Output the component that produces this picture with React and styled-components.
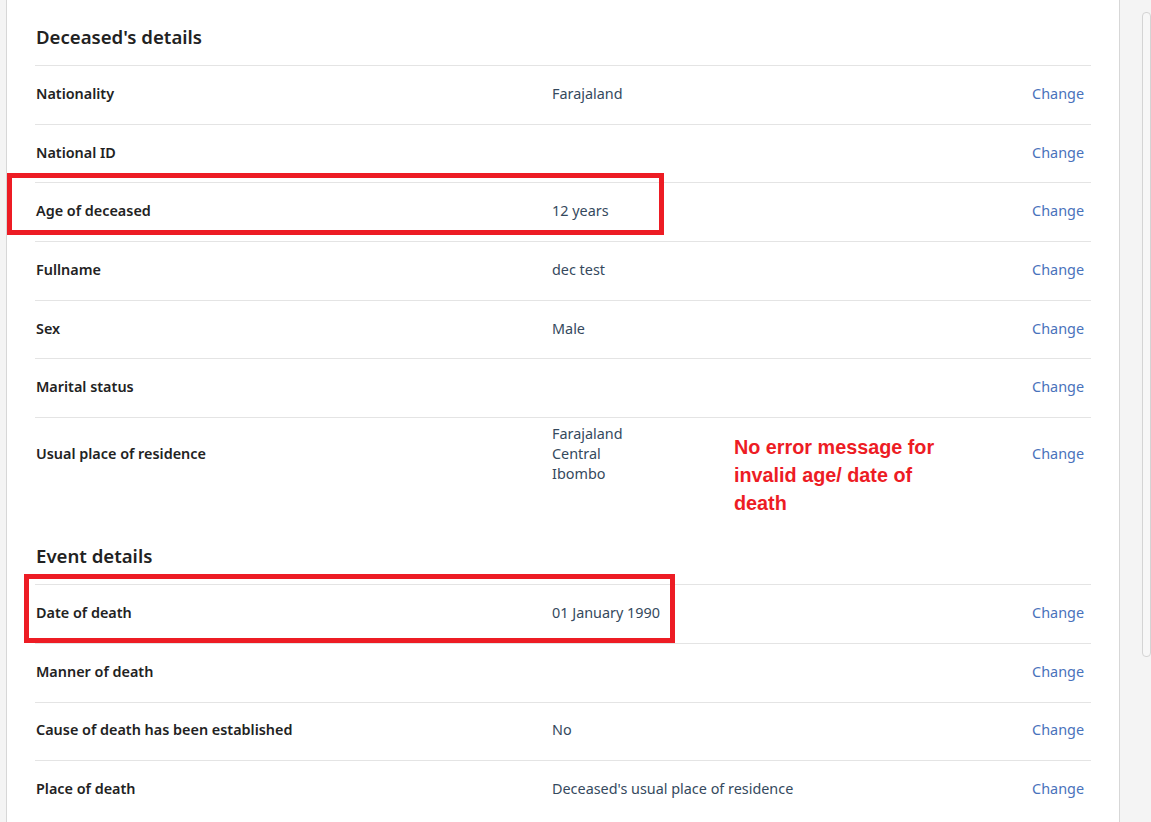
import React from "react";
import styled, { createGlobalStyle } from "styled-components";

const GlobalStyle = createGlobalStyle`
  html, body {
    margin: 0;
    padding: 0;
    background: #f4f4f4;
    font-family: "Noto Sans", "Open Sans", sans-serif;
    overflow: hidden;
  }
`;

const deceased = [
  { label: "Nationality", value: ["Farajaland"] },
  { label: "National ID", value: [] },
  { label: "Age of deceased", value: ["12 years"] },
  { label: "Fullname", value: ["dec test"] },
  { label: "Sex", value: ["Male"] },
  { label: "Marital status", value: [] },
  { label: "Usual place of residence", value: ["Farajaland", "Central", "Ibombo"] },
];

const event = [
  { label: "Date of death", value: ["01 January 1990"] },
  { label: "Manner of death", value: [] },
  { label: "Cause of death has been established", value: ["No"] },
  { label: "Place of death", value: ["Deceased's usual place of residence"] },
];

const DetailRow = ({ label, value }) => (
  <Row>
    <Label>{label}</Label>
    <Value>
      {value.map((v) => (
        <div key={v}>{v}</div>
      ))}
    </Value>
    <Action>Change</Action>
  </Row>
);

const App = () => {
  return (
    <>
      <GlobalStyle />
      <Page>
        <Card>
          <Section>
            <Title>Deceased's details</Title>
            {deceased.map((r) => (
              <DetailRow key={r.label} {...r} />
            ))}
          </Section>
          <Section>
            <Title>Event details</Title>
            {event.map((r) => (
              <DetailRow key={r.label} {...r} />
            ))}
          </Section>
        </Card>
        <SidePanel />

        <Highlight top={173} left={7} width={657} height={62} />
        <Highlight top={574} left={24} width={651} height={69} />
        <Note>No error message for invalid age/ date of death</Note>
      </Page>
    </>
  );
};

export default App;

const Page = styled.div`
  position: relative;
  display: flex;
  align-items: flex-start;
  gap: 22px;
  padding-left: 6px;
  height: 822px;
`;

const Card = styled.div`
  width: 1114px;
  flex-shrink: 0;
  box-sizing: border-box;
  min-height: 900px;
  background: #fff;
  border-left: 1px solid #d7d7d7;
  border-right: 1px solid #d7d7d7;
  padding: 23px 28px 0 28px;
`;

const Section = styled.div`
  & + & {
    margin-top: 50px;
  }
`;

const Title = styled.h2`
  margin: 0 0 15px 1px;
  font-size: 18.6px;
  line-height: 27px;
  font-weight: 600;
  color: #222;
`;

const Row = styled.div`
  display: flex;
  align-items: center;
  box-sizing: border-box;
  min-height: 58.7px;
  padding: 6px 0 8px;
  border-top: 1px solid #e4e4e4;
  font-size: 14.4px;
  line-height: 20px;
`;

const Label = styled.div`
  width: 516px;
  padding-left: 1px;
  font-weight: 600;
  color: #222;
`;

const Value = styled.div`
  flex: 1;
  color: #35495d;
`;

const Action = styled.a`
  padding-right: 7px;
  color: #4972bb;
  cursor: pointer;
`;

const SidePanel = styled.div`
  margin-top: 12px;
  width: 40px;
  height: 645px;
  box-sizing: border-box;
  border: 1px solid #d4d4d4;
  border-radius: 4px;
  background: #f7f7f7;
`;

const Highlight = styled.div`
  position: absolute;
  top: ${({ top }) => top}px;
  left: ${({ left }) => left}px;
  width: ${({ width }) => width}px;
  height: ${({ height }) => height}px;
  box-sizing: border-box;
  border: 5px solid #ed1c24;
`;

const Note = styled.div`
  position: absolute;
  top: 433px;
  left: 734px;
  width: 212px;
  font-family: "Liberation Sans", Arial, sans-serif;
  font-weight: 700;
  font-size: 19.8px;
  line-height: 28px;
  color: #ed1c24;
`;
